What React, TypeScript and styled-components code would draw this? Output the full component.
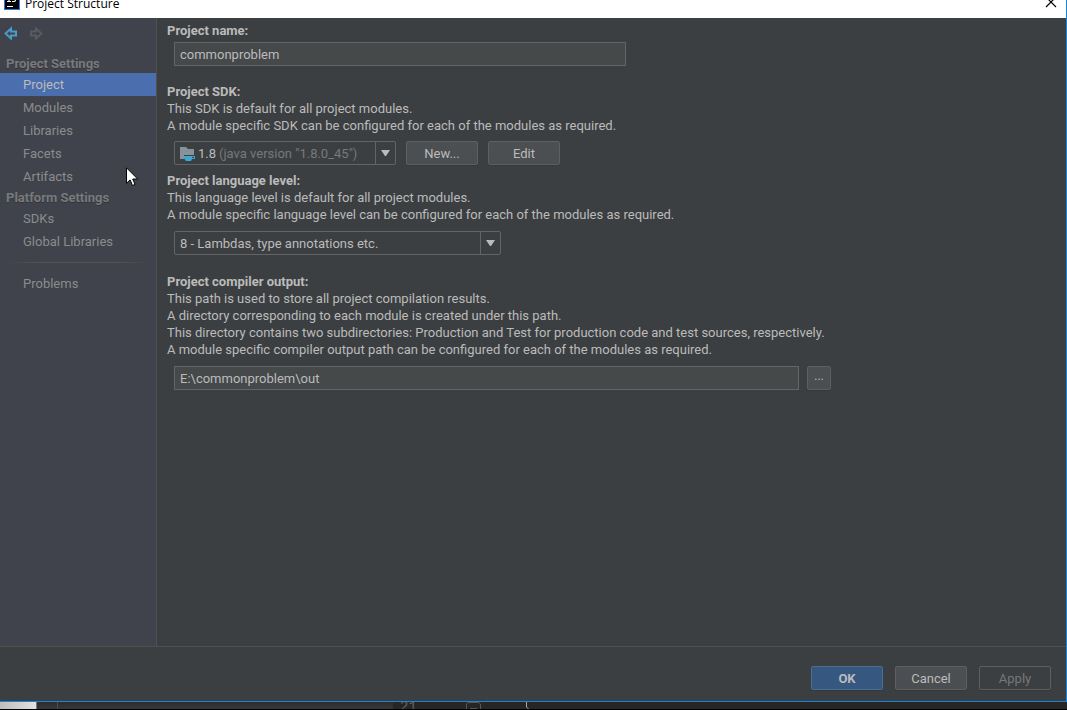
import React from "react";
import styled, { createGlobalStyle, css } from "styled-components";

const Global = createGlobalStyle`
  *, *::before, *::after { box-sizing: border-box; }
  body {
    margin: 0;
    background: #000;
    color: #bbbbbb;
    font: 13px/17px Roboto, sans-serif;
  }
  button, input, select { font: inherit; color: inherit; margin: 0; }
  p, h2 { margin: 0; }
`;

const Screen = styled.div`
  display: flex;
  flex-direction: column;
  min-height: 100vh;
  overflow: hidden;
`;

const Dialog = styled.div`
  flex: 1;
  display: flex;
  flex-direction: column;
  background: #3c3f41;
  border: solid #1883d7;
  border-width: 0 1px 1px 0;
`;

const TitleBar = styled.header`
  display: flex;
  align-items: flex-end;
  height: 18px;
  overflow: hidden;
  background: #fff;
  color: #000;
`;

const TitleRow = styled.div`
  flex: 1;
  display: flex;
  align-items: center;
  height: 30px;
  padding: 0 9px 0 4px;
  gap: 5px;
`;

const TitleText = styled.span`
  flex: 1;
  font-family: "Open Sans", sans-serif;
  font-size: 12px;
`;

const IconButton = styled.button`
  display: flex;
  padding: 0;
  border: 0;
  background: none;
`;

const Body = styled.div`
  flex: 1;
  display: flex;
`;

const Sidebar = styled.nav`
  width: 157px;
  flex: none;
  background: #40434c;
  border-right: 1px solid #515151;
`;

const History = styled.div`
  display: flex;
  gap: 11px;
  height: 36px;
  padding: 8px 4px 0;
`;

const GroupTitle = styled.h2`
  padding-left: 6px;
  font-size: 13px;
  line-height: 19px;
  color: #787a7c;
  text-shadow: 0 1px 0 #32343a;
`;

const NavItem = styled.a<{ $active?: boolean }>`
  display: block;
  padding-left: 23px;
  line-height: 23px;
  text-decoration: none;
  color: ${(p) => (p.$active ? "#bbbbbb" : "#8b8c8c")};
  background: ${(p) => (p.$active ? "#4b6eaf" : "transparent")};
`;

const Divider = styled.hr`
  height: 1px;
  margin: 9px 8px;
  border: 0;
  background: linear-gradient(90deg, transparent, #55524f 20%, #55524f 80%, transparent);
`;

const Main = styled.main`
  flex: 1;
  min-width: 0;
  padding: 4px 10px;
`;

const Section = styled.section<{ $gap?: number }>`
  margin-bottom: ${(p) => p.$gap ?? 0}px;
`;

const Heading = styled.label`
  display: block;
  font-weight: bold;
`;

const FieldRow = styled.div<{ $top: number }>`
  display: flex;
  align-items: center;
  margin-top: ${(p) => p.$top}px;
  padding-left: 7px;
`;

const TextInput = styled.input<{ $width: number }>`
  width: ${(p) => p.$width}px;
  height: 24px;
  padding: 0 5px;
  border: 1px solid #646464;
  background: #45494a;
`;

const Combo = styled.div<{ $width: number }>`
  position: relative;
  width: ${(p) => p.$width}px;
  height: 24px;
`;

const Select = styled.select<{ $indent: number }>`
  appearance: none;
  width: 100%;
  height: 24px;
  padding: 0 21px 0 ${(p) => p.$indent}px;
  border: 1px solid #646464;
  border-radius: 2px;
  background: #3c3f41;
`;

const ComboArrow = styled.span`
  position: absolute;
  top: 1px;
  right: 1px;
  bottom: 1px;
  width: 20px;
  display: grid;
  place-items: center;
  border-left: 1px solid #646464;
  pointer-events: none;
`;

const ComboIcon = styled.span`
  position: absolute;
  top: 6px;
  left: 6px;
  display: flex;
  pointer-events: none;
`;

const ComboHint = styled.span`
  position: absolute;
  top: 4px;
  left: 45px;
  color: #787878;
  pointer-events: none;
`;

const Button = styled.button<{ $kind?: "primary" | "small" }>`
  width: 72px;
  height: 24px;
  padding: 0;
  border: 1px solid #5e6060;
  border-radius: 2px;
  background: linear-gradient(#4c5052, #4a4e50);
  box-shadow: 0 1px 0 #353739;
  &:disabled {
    background: none;
    color: #777777;
  }
  ${(p) =>
    p.$kind === "primary" &&
    css`
      font-weight: bold;
      border-color: #4c708c;
      background: #365880;
    `}
  ${(p) =>
    p.$kind === "small" &&
    css`
      width: 24px;
      padding-bottom: 4px;
      font-size: 12px;
    `}
`;

const ButtonGroup = styled.div`
  display: flex;
  gap: 10px;
  margin-left: 10px;
`;

const BrowseSlot = styled.div`
  display: flex;
  margin-left: 8px;
`;

const Footer = styled.footer`
  display: flex;
  justify-content: flex-end;
  gap: 12px;
  height: 55px;
  padding: 19px 15px 0;
  border-top: 1px solid #515151;
`;

const Backdrop = styled.div`
  display: flex;
  height: 8px;
  overflow: hidden;
  border-bottom: 1px solid #000;
  background: linear-gradient(#2c2d2e, #353739);
`;

const BackdropPage = styled.div`
  width: 37px;
  background: linear-gradient(90deg, #bdbdbd, #e2e2e2);
  border-right: 1px solid #777;
`;

const BackdropPanel = styled.div`
  width: 356px;
  padding-left: 20px;
  &::before {
    content: "";
    display: block;
    width: 1px;
    height: 100%;
    background: #4a4c4e;
  }
`;

const BackdropEditor = styled.div`
  flex: 1;
  display: flex;
  gap: 49px;
  padding-left: 7px;
  background: #262626;
  color: #606366;
  font: 14px/10px "Liberation Mono", monospace;
`;

const Pointer = styled.svg`
  position: absolute;
  left: 126px;
  top: 167px;
  pointer-events: none;
`;

const Arrow = () => (
  <svg width="9" height="6" viewBox="0 0 9 6" aria-hidden="true">
    <path d="M0 0h9L5 6H4z" fill="#bbbbbb" />
  </svg>
);

const HistoryArrow = ({ color, flip }: { color: string; flip?: boolean }) => (
  <svg width="14" height="14" viewBox="0 0 14 14" aria-hidden="true">
    <path
      d="M1.600 7.500 7 2.500V5.500h5v4H7v3z"
      transform={flip ? "translate(14 0) scale(-1 1)" : undefined}
      fill="none"
      stroke={color}
      strokeWidth="2"
    />
  </svg>
);

export default function App() {
  return (
    <Screen>
      <Global />
      <Dialog>
        <TitleBar>
          <TitleRow>
            <svg width="16" height="16" viewBox="0 0 16 16" aria-hidden="true">
              <path d="M0 0h16v15H0z" fill="#1b7ee0" />
              <path d="M1 0h14v14H1z" fill="#000" />
              <path d="M3 2.500h4M5 2v4M3 6.500h4M8 6.500h2q1.500 0 1.500-1.500V2M3 11.500h6" stroke="#fff" strokeWidth="1.200" fill="none" />
            </svg>
            <TitleText>Project Structure</TitleText>
            <IconButton aria-label="Close">
              <svg width="12" height="12" viewBox="0 0 12 12" aria-hidden="true">
                <path d="M1 0l10 10M11 0 1 10" stroke="#000" strokeWidth="1.200" />
              </svg>
            </IconButton>
          </TitleRow>
        </TitleBar>
        <Body>
          <Sidebar>
            <History>
              <IconButton aria-label="Back"><HistoryArrow color="#4a9bc7" /></IconButton>
              <IconButton aria-label="Forward" disabled><HistoryArrow color="#595b5e" flip /></IconButton>
            </History>
            <GroupTitle>Project Settings</GroupTitle>
            <NavItem href="#project" $active>Project</NavItem>
            <NavItem href="#modules">Modules</NavItem>
            <NavItem href="#libraries">Libraries</NavItem>
            <NavItem href="#facets">Facets</NavItem>
            <NavItem href="#artifacts">Artifacts</NavItem>
            <GroupTitle>Platform Settings</GroupTitle>
            <NavItem href="#sdks">SDKs</NavItem>
            <NavItem href="#global">Global Libraries</NavItem>
            <Divider />
            <NavItem href="#problems">Problems</NavItem>
          </Sidebar>
          <Main>
            <Section $gap={17}>
              <Heading htmlFor="name">Project name:</Heading>
              <FieldRow $top={3}>
                <TextInput id="name" $width={452} defaultValue="commonproblem" />
              </FieldRow>
            </Section>
            <Section $gap={7}>
              <Heading htmlFor="sdk">Project SDK:</Heading>
              <p>This SDK is default for all project modules.</p>
              <p>A module specific SDK can be configured for each of the modules as required.</p>
              <FieldRow $top={7}>
                <Combo $width={222}>
                  <Select id="sdk" $indent={23}><option>1.8</option></Select>
                  <ComboIcon>
                    <svg width="16" height="14" viewBox="0 0 16 14" aria-hidden="true">
                      <path d="M0 0h6l2 2h6v6H4v4H0z" fill="#87939a" />
                      <path d="M4 9h11v3h-3l-1 2H6l-2-2.500z" fill="#3ea6d1" />
                      <path d="M12 10h2v1h-2z" fill="#3c3f41" />
                    </svg>
                  </ComboIcon>
                  <ComboHint>(java version "1.8.0_45")</ComboHint>
                  <ComboArrow><Arrow /></ComboArrow>
                </Combo>
                <ButtonGroup>
                  <Button>New...</Button>
                  <Button>Edit</Button>
                </ButtonGroup>
              </FieldRow>
            </Section>
            <Section $gap={18}>
              <Heading htmlFor="level">Project language level:</Heading>
              <p>This language level is default for all project modules.</p>
              <p>A module specific language level can be configured for each of the modules as required.</p>
              <FieldRow $top={8}>
                <Combo $width={327}>
                  <Select id="level" $indent={5}><option>8 - Lambdas, type annotations etc.</option></Select>
                  <ComboArrow><Arrow /></ComboArrow>
                </Combo>
              </FieldRow>
            </Section>
            <Section>
              <Heading htmlFor="output">Project compiler output:</Heading>
              <p>This path is used to store all project compilation results.</p>
              <p>A directory corresponding to each module is created under this path.</p>
              <p>This directory contains two subdirectories: Production and Test for production code and test sources, respectively.</p>
              <p>A module specific compiler output path can be configured for each of the modules as required.</p>
              <FieldRow $top={8}>
                <TextInput id="output" $width={625} defaultValue="E:\commonproblem\out" />
                <BrowseSlot><Button $kind="small" aria-label="Browse">...</Button></BrowseSlot>
              </FieldRow>
            </Section>
          </Main>
        </Body>
        <Footer>
          <Button $kind="primary">OK</Button>
          <Button>Cancel</Button>
          <Button disabled>Apply</Button>
        </Footer>
      </Dialog>
      <Backdrop>
        <BackdropPage />
        <BackdropPanel />
        <BackdropEditor>
          <span>21</span>
          <svg width="64" height="7" viewBox="0 0 64 7" aria-hidden="true">
            <path d="M.5 7V2l2-1.500h10l2 1.500v5M4 6.500h7" stroke="#55585a" fill="none" />
            <path d="M60.500 0v5l2 2" stroke="#a9a9a9" fill="none" />
          </svg>
        </BackdropEditor>
      </Backdrop>
      <Pointer width="13" height="20" viewBox="0 0 13 20" aria-hidden="true">
        <path d="M.5.8v15.500l3.600-3.400 2.400 5.600 2.600-1.100-2.400-5.400h5z" fill="#fff" stroke="#000" />
      </Pointer>
    </Screen>
  );
}
